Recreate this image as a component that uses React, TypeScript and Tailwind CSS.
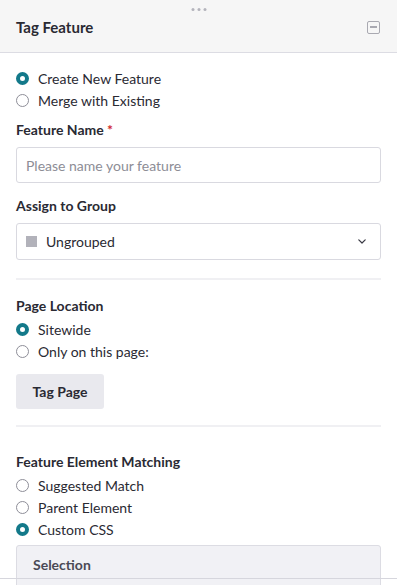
import React from "react";

const font = { fontFamily: "Lato, 'Open Sans', sans-serif" };

function Radio({ checked, label }: { checked?: boolean; label: string }) {
  return (
    <label className="flex items-center h-[22px] gap-[9px]">
      {checked ? (
        <span className="w-[13px] h-[13px] rounded-full border-[4px] border-[#13798a] bg-white box-border" />
      ) : (
        <span className="w-[13px] h-[13px] rounded-full border border-[#8e8e98] bg-white box-border" />
      )}
      <span className="text-[14px] text-[#2a2a33]">{label}</span>
    </label>
  );
}

export default function App() {
  return (
    <div style={font} className="w-[397px] h-[585px] bg-white overflow-hidden relative">
      <div className="h-[53px] bg-[#f6f6f6] border-b border-[#dcdce3] relative flex items-center justify-between px-4">
        <div className="absolute top-[8px] left-1/2 -translate-x-1/2 flex gap-[3px]">
          <span className="w-[3px] h-[3px] rounded-full bg-[#b4b4bc]" />
          <span className="w-[3px] h-[3px] rounded-full bg-[#b4b4bc]" />
          <span className="w-[3px] h-[3px] rounded-full bg-[#b4b4bc]" />
        </div>
        <span className="text-[15px] font-bold text-[#2a2a33] mt-[2px]">Tag Feature</span>
        <span className="w-[13px] h-[13px] border-[1.5px] border-[#a9a9b1] rounded-[2px] flex items-center justify-center mr-[1px] mt-[2px]">
          <span className="w-[7px] h-[1.5px] bg-[#a9a9b1]" />
        </span>
      </div>

      <div className="px-4">
        <div className="pt-[14px]">
          <Radio checked label="Create New Feature" />
          <Radio label="Merge with Existing" />
        </div>

        <div className="mt-[10px] text-[14px] font-bold text-[#2a2a33] h-[18px] leading-[18px]">
          Feature Name <span className="text-[#d0262b]">*</span>
        </div>
        <div className="mt-[8px] h-[36px] border border-[#d9d9e0] rounded-[3px] flex items-center px-[9px] text-[14px] text-[#8d8d96]">
          Please name your feature
        </div>

        <div className="mt-[14px] text-[14px] font-bold text-[#2a2a33] h-[18px] leading-[18px]">
          Assign to Group
        </div>
        <div className="mt-[8px] h-[37px] border border-[#d9d9e0] rounded-[3px] flex items-center pl-[9px] pr-[14px] justify-between">
          <div className="flex items-center gap-[9px]">
            <span className="w-[11px] h-[11px] bg-[#b2b2ba]" />
            <span className="text-[14px] text-[#2a2a33]">Ungrouped</span>
          </div>
          <svg width="8" height="5" viewBox="0 0 8 5" fill="none">
            <path d="M0.8 0.8l3.2 3.2 3.2-3.2" stroke="#3a3a44" strokeWidth="1.2" strokeLinecap="round" strokeLinejoin="round" />
          </svg>
        </div>

        <div className="mt-[18px] h-[2px] bg-[#f0f0f3]" />

        <div className="mt-[17px] text-[14px] font-bold text-[#2a2a33] h-[18px] leading-[18px]">
          Page Location
        </div>
        <div className="mt-[3px]">
          <Radio checked label="Sitewide" />
          <Radio label="Only on this page:" />
        </div>
        <div className="mt-[12px] w-[88px] h-[35px] bg-[#e9e9ee] rounded-[3px] flex items-center justify-center text-[14px] font-bold text-[#2a2a33]">
          Tag Page
        </div>

        <div className="mt-[16px] h-[2px] bg-[#f0f0f3]" />

        <div className="mt-[26px] text-[14px] font-bold text-[#2a2a33] h-[18px] leading-[18px]">
          Feature Element Matching
        </div>
        <div className="mt-[3px]">
          <Radio label="Suggested Match" />
          <Radio label="Parent Element" />
          <Radio checked label="Custom CSS" />
        </div>
        <div className="mt-[5px] h-[60px] bg-[#f1f1f5] border border-[#dcdce3] rounded-t-[3px] px-4 pt-[6px]">
          <span className="text-[14px] font-bold text-[#4a4a55]">Selection</span>
        </div>
      </div>
      <div className="absolute left-0 right-0 top-[578px] h-[1px] bg-[#d6d6dd]" />
    </div>
  );
}
